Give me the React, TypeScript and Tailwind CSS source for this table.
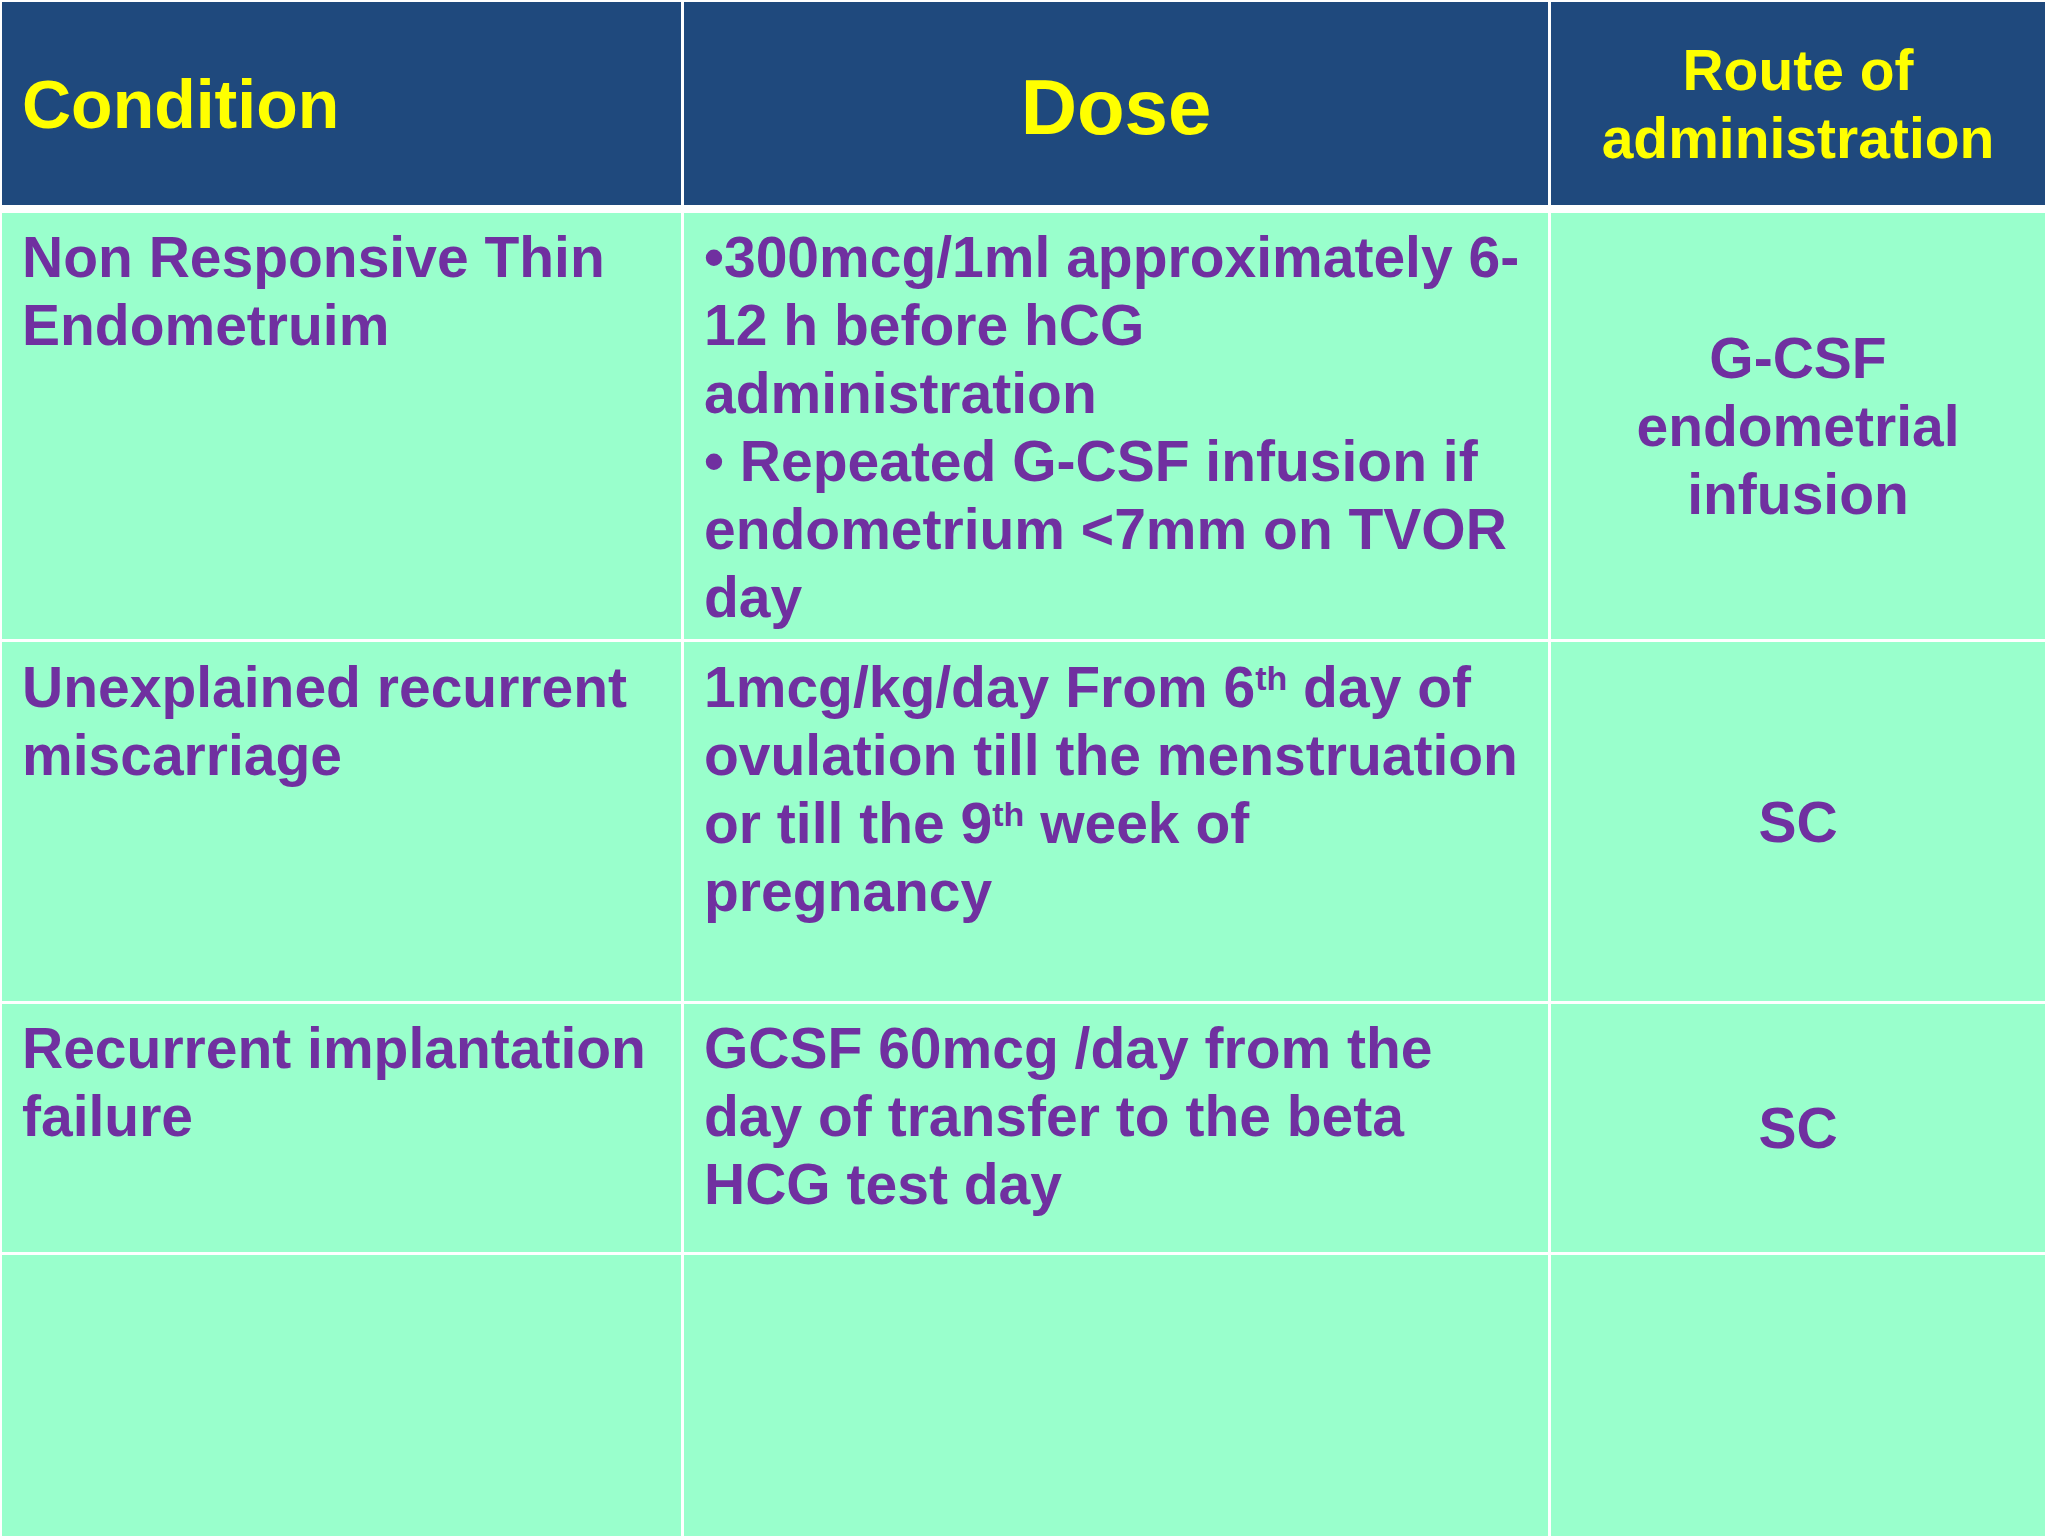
const rows = [
  {
    condition: ["Non Responsive Thin", "Endometruim"],
    dose: [
      "•300mcg/1ml approximately 6-",
      "12 h before hCG",
      "administration",
      "• Repeated G-CSF infusion if",
      "endometrium <7mm on TVOR",
      "day",
    ],
    route: ["G-CSF", "endometrial", "infusion"],
    height: "h-[426px]",
  },
];

function Sup({ children }: { children: React.ReactNode }) {
  return <sup className="text-[34px] leading-none -top-[17px]">{children}</sup>;
}

function Line({ children }: { children: React.ReactNode }) {
  return <div className="whitespace-nowrap">{children}</div>;
}

export default function App() {
  const body = "bg-[#99ffcc] text-[#7030a0]";
  return (
    <div className="flex h-[1536px] w-[2048px] flex-col bg-white pl-[2px] pr-[3px] pt-[2px] font-['Liberation_Sans',Arial,sans-serif] font-bold">
      {/* header */}
      <div className="grid h-[203px] grid-cols-[679px_864px_494px] gap-x-[3px] text-[#ffff00]">
        <div className="flex items-center bg-[#1f497d] pl-[20px] text-[68px] leading-none">
          Condition
        </div>
        <div className="flex items-center justify-center bg-[#1f497d] pt-[6px] text-[78px] leading-none">
          Dose
        </div>
        <div className="flex flex-col items-center justify-center bg-[#1f497d] text-center text-[57px] leading-[68px]">
          <span>Route of</span>
          <span>administration</span>
        </div>
      </div>

      <div className="mt-[8px] flex flex-1 flex-col gap-y-[3px] text-[57px] leading-[68px]">
        {rows.map((r) => (
          <div
            key={r.condition[0]}
            className={`grid ${r.height} grid-cols-[679px_864px_494px] gap-x-[3px]`}
          >
            <div className={`${body} pl-[20px] pt-[10px]`}>
              {r.condition.map((l) => (
                <Line key={l}>{l}</Line>
              ))}
            </div>
            <div className={`${body} pl-[20px] pt-[10px]`}>
              {r.dose.map((l) => (
                <Line key={l}>{l}</Line>
              ))}
            </div>
            <div className={`${body} flex flex-col items-center justify-center text-center`}>
              {r.route.map((l) => (
                <Line key={l}>{l}</Line>
              ))}
            </div>
          </div>
        ))}

        <div className="grid h-[359px] grid-cols-[679px_864px_494px] gap-x-[3px]">
          <div className={`${body} pl-[20px] pt-[11px]`}>
            <Line>Unexplained recurrent</Line>
            <Line>miscarriage</Line>
          </div>
          <div className={`${body} pl-[20px] pt-[11px]`}>
            <Line>
              1mcg/kg/day From 6<Sup>th</Sup> day of
            </Line>
            <Line>ovulation till the menstruation</Line>
            <Line>
              or till the 9<Sup>th</Sup> week of
            </Line>
            <Line>pregnancy</Line>
          </div>
          <div className={`${body} flex items-center justify-center`}>SC</div>
        </div>

        <div className="grid h-[248px] grid-cols-[679px_864px_494px] gap-x-[3px]">
          <div className={`${body} pl-[20px] pt-[10px]`}>
            <Line>Recurrent implantation</Line>
            <Line>failure</Line>
          </div>
          <div className={`${body} pl-[20px] pt-[10px]`}>
            <Line>GCSF 60mcg /day from the</Line>
            <Line>day of transfer to the beta</Line>
            <Line>HCG test day</Line>
          </div>
          <div className={`${body} flex items-center justify-center`}>SC</div>
        </div>

        <div className="grid flex-1 grid-cols-[679px_864px_494px] gap-x-[3px]">
          <div className={body} />
          <div className={body} />
          <div className={body} />
        </div>
      </div>
    </div>
  );
}
